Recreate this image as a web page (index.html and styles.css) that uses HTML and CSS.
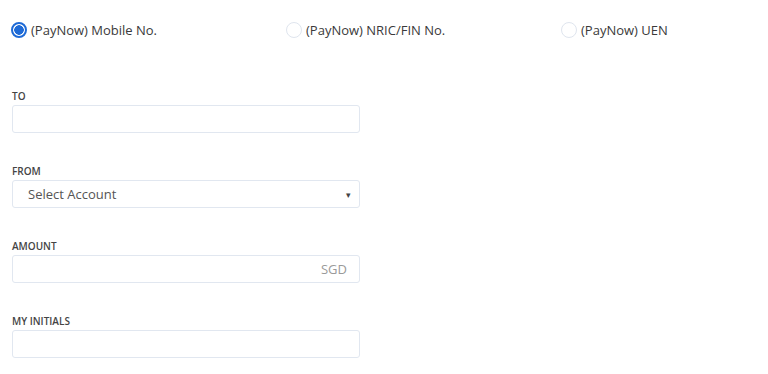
FILE: index.html
```html
<!DOCTYPE html>
<html lang="en">
<head>
    <meta charset="UTF-8">
    <meta name="viewport" content="width=device-width, initial-scale=1.0">
    <title>PayNow Transfer</title>
    <link rel="stylesheet" href="styles.css">
</head>
<body>

    <!-- PayNow type -->
    <div class="radio-row">
        <label class="radio">
            <input type="radio" name="payType" checked>
            <span class="radio-mark"></span>
            <span>(PayNow) Mobile No.</span>
        </label>
        <label class="radio">
            <input type="radio" name="payType">
            <span class="radio-mark"></span>
            <span>(PayNow) NRIC/FIN No.</span>
        </label>
        <label class="radio">
            <input type="radio" name="payType">
            <span class="radio-mark"></span>
            <span>(PayNow) UEN</span>
        </label>
    </div>

    <!-- Transfer form -->
    <form class="form">
        <div class="field">
            <label class="field-label" for="toInput">TO</label>
            <input class="box" type="text" id="toInput">
        </div>

        <div class="field">
            <label class="field-label" for="fromSelect">FROM</label>
            <div class="box select-box">
                <span>Select Account</span>
                <span class="arrow">&#9662;</span>
            </div>
        </div>

        <div class="field">
            <label class="field-label" for="amountInput">AMOUNT</label>
            <div class="box amount-box">
                <input type="text" id="amountInput">
                <span class="currency">SGD</span>
            </div>
        </div>

        <div class="field">
            <label class="field-label" for="initialsInput">MY INITIALS</label>
            <input class="box" type="text" id="initialsInput">
        </div>
    </form>

</body>
</html>
```

FILE: styles.css
```css
/* General Styles */
body {
    margin: 0;
    font-family: 'Open Sans', sans-serif;
    background: #fff;
    color: #333;
}

/* Radio Row */
.radio-row {
    display: grid;
    grid-template-columns: 275px 275px 1fr;
    padding: 22px 0 0 11px;
}

.radio {
    display: flex;
    align-items: center;
    gap: 4px;
    height: 16px;
    font-size: 13px;
    line-height: 16px;
    color: #3a3a3a;
    cursor: pointer;
}

.radio input {
    display: none;
}

.radio-mark {
    width: 16px;
    height: 16px;
    box-sizing: border-box;
    border: 1px solid #dfe5ee;
    border-radius: 50%;
    background: #fff;
}

.radio input:checked + .radio-mark {
    border: 2px solid #1e6ad6;
    background: radial-gradient(circle, #1e6ad6 0 4.5px, #fff 5px);
}

/* Form */
.form {
    padding: 51px 0 0 12px;
    width: 348px;
}

.field {
    margin-bottom: 31px;
}

.field:last-child {
    margin-bottom: 0;
}

.field-label {
    display: block;
    font-size: 10px;
    line-height: 14px;
    font-weight: 600;
    color: #444;
    margin-bottom: 2px;
}

.box {
    display: block;
    width: 100%;
    height: 28px;
    box-sizing: border-box;
    border: 1px solid #e1e7f0;
    border-radius: 3px;
    background: #fff;
    font-family: inherit;
    font-size: 13px;
    padding: 0 12px;
    outline: none;
}

.select-box {
    display: flex;
    align-items: center;
    justify-content: space-between;
    padding: 0 8px 0 15px;
    color: #555;
}

.arrow {
    font-size: 9px;
    color: #444;
}

.amount-box {
    display: flex;
    align-items: center;
}

.amount-box input {
    flex: 1;
    border: none;
    outline: none;
    font-family: inherit;
    font-size: 13px;
    min-width: 0;
}

.currency {
    color: #9a9a9a;
}
```
